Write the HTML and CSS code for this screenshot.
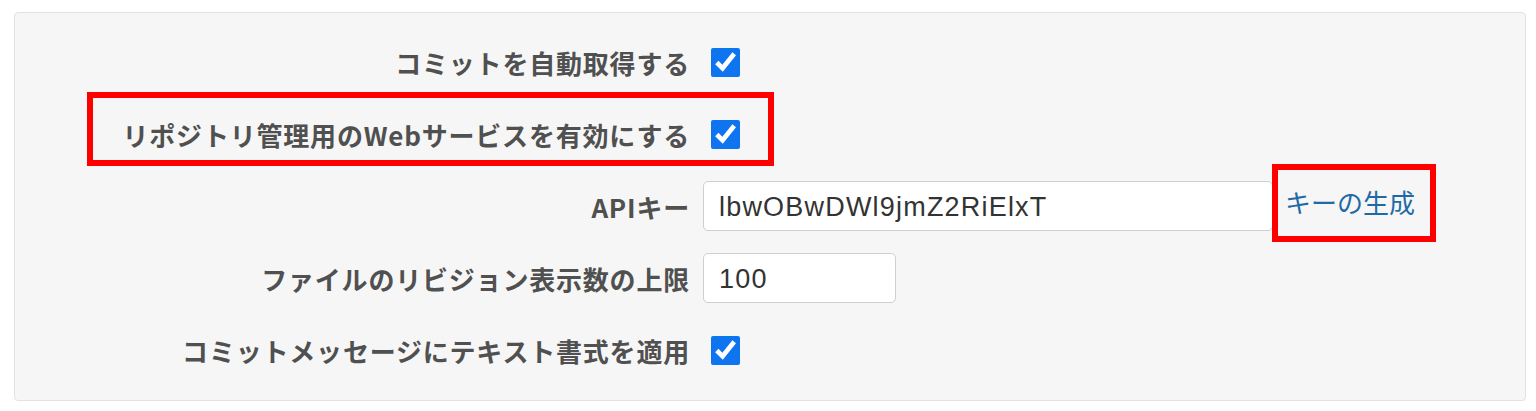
FILE: index.html
```html
<!DOCTYPE html>
<html lang="ja">
<head>
    <meta charset="UTF-8">
    <title>リポジトリ設定</title>
    <link rel="stylesheet" href="styles.css">
</head>
<body>
    <div class="box">
        <div class="fila">
            <label for="autofetch">コミットを自動取得する</label>
            <div class="campo">
                <input type="checkbox" id="autofetch" checked>
            </div>
        </div>

        <div class="fila">
            <!-- recuadro rojo de la captura -->
            <div class="marca"></div>
            <label for="ws">リポジトリ管理用のWebサービスを有効にする</label>
            <div class="campo">
                <input type="checkbox" id="ws" checked>
            </div>
        </div>

        <div class="fila">
            <label for="apikey">APIキー</label>
            <div class="campo">
                <input type="text" id="apikey" class="texto largo" value="lbwOBwDWl9jmZ2RiElxT">
                <a href="#" class="generar">キーの生成</a>
            </div>
        </div>

        <div class="fila">
            <label for="limite">ファイルのリビジョン表示数の上限</label>
            <div class="campo">
                <input type="text" id="limite" class="texto corto" value="100">
            </div>
        </div>

        <div class="fila">
            <label for="formato">コミットメッセージにテキスト書式を適用</label>
            <div class="campo">
                <input type="checkbox" id="formato" checked>
            </div>
        </div>
    </div>
</body>
</html>
```

FILE: styles.css
```css
body {
    margin: 12px 10px 0 14px;
    background-color: #ffffff;
    font-family: "Noto Sans CJK JP", "Liberation Sans", sans-serif;
}

.box {
    background-color: #f6f6f6;
    border: 1px solid #e2e2e2;
    border-radius: 4px;
    padding: 23px 0 23px 0;
    display: flex;
    flex-direction: column;
    gap: 20px;
    box-sizing: border-box;
    height: 389px;
}

.fila {
    display: grid;
    grid-template-columns: 675px 1fr;
    grid-template-rows: 52px;
    column-gap: 13px;
    align-items: center;
    height: 52px;
}

.fila label {
    grid-column: 1;
    grid-row: 1;
    text-align: right;
    font-size: 26px;
    font-weight: bold;
    color: #505050;
    letter-spacing: 0.8px;
}

.campo {
    grid-column: 2;
    grid-row: 1;
    display: flex;
    align-items: center;
    height: 52px;
}

.campo input[type="checkbox"] {
    width: 29px;
    height: 29px;
    margin: 0 0 0 8px;
    accent-color: #0f74f0;
}

.texto {
    box-sizing: border-box;
    height: 50px;
    border: 1px solid #cfcfcf;
    border-radius: 5px;
    background-color: #ffffff;
    padding: 2px 0 0 15px;
    font-family: "Liberation Sans", Arial, sans-serif;
    font-size: 27px;
    letter-spacing: 1.2px;
    color: #333333;
}

.largo {
    width: 570px;
}

.corto {
    width: 193px;
}

.generar {
    flex-shrink: 0;
    margin: 0 0 6px -1px;
    border: 6px solid #ff0000;
    height: 62px;
    box-sizing: content-box;
    padding: 0 15px 4px 7px;
    display: flex;
    align-items: center;
    font-size: 26px;
    color: #1f6aa5;
    text-decoration: none;
}

.marca {
    grid-column: 1 / 3;
    grid-row: 1;
    justify-self: start;
    margin: 0 0 10px 72px;
    width: 675px;
    height: 62px;
    border: 6px solid #ff0000;
}
```
